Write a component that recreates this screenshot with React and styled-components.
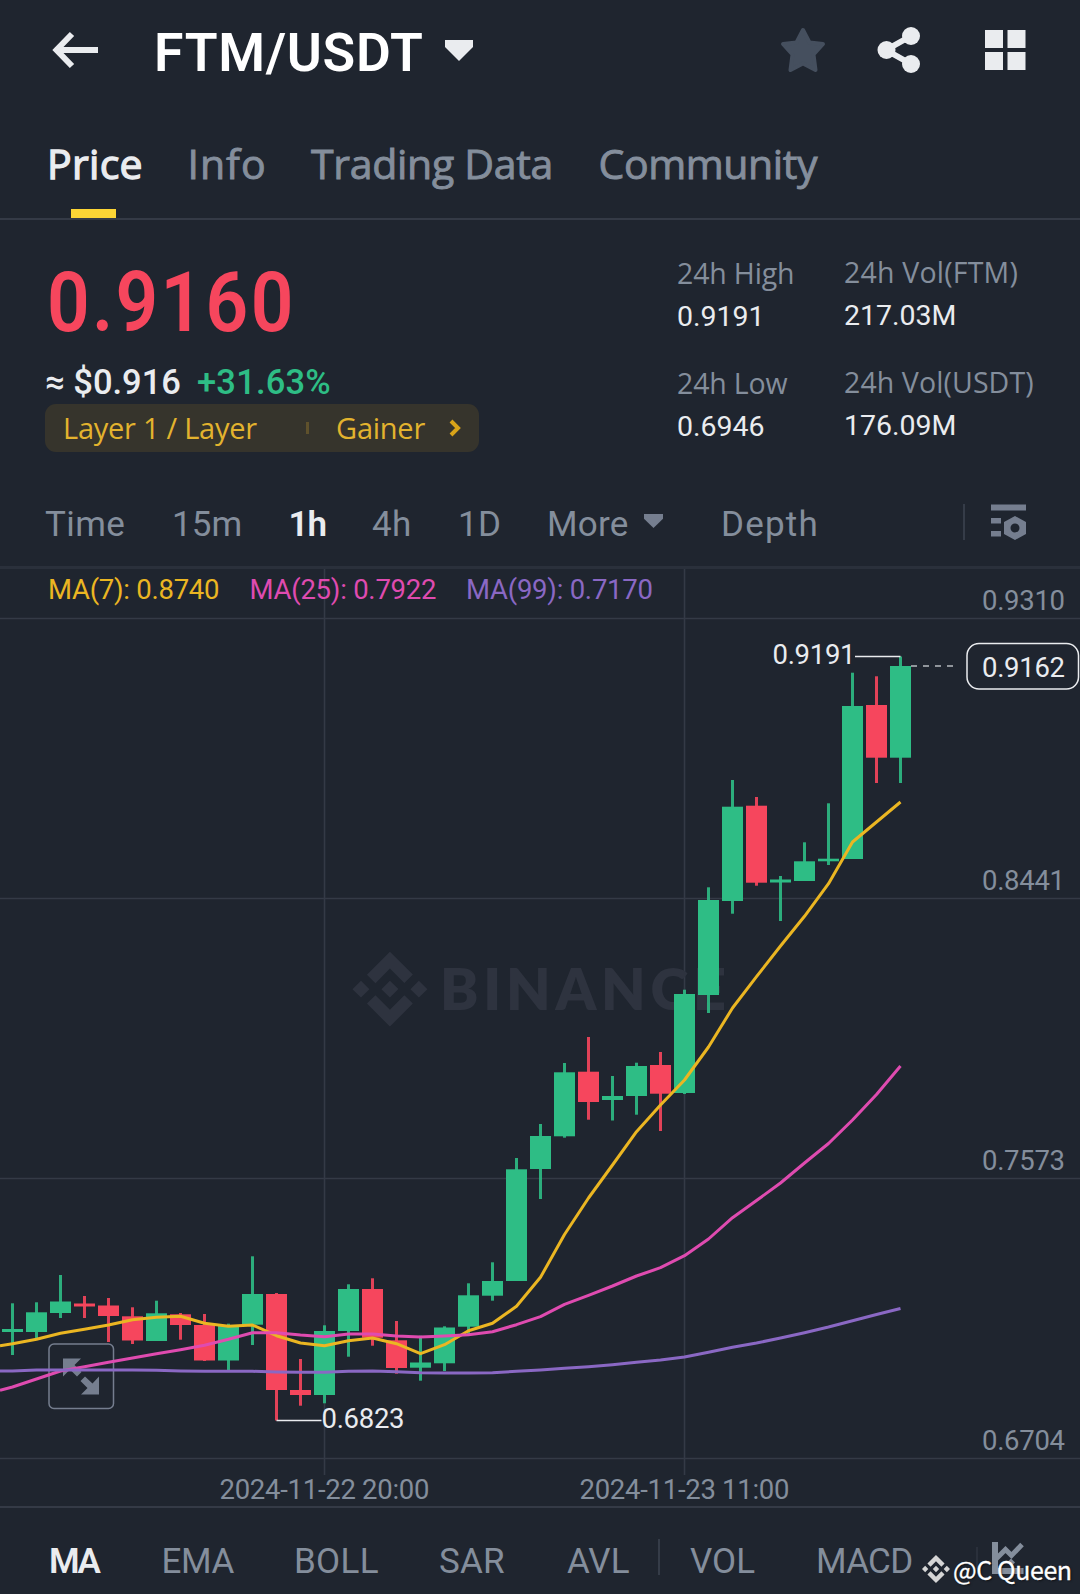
import React from 'react';
import styled, { createGlobalStyle, css } from 'styled-components';

const colors = {
  bg: '#1f252f',
  text: '#eaecef',
  muted: '#848e9c',
  icon: '#757e8f',
  line: '#343a46',
  green: '#2ebd85',
  red: '#f6465d',
  yellow: '#ebb622',
  pink: '#df4bb0',
  purple: '#8a68c4',
};

const fonts = {
  ui: "'Open Sans', 'Noto Sans', sans-serif",
  number: "Roboto, 'Liberation Sans', sans-serif",
};

const GlobalStyle = createGlobalStyle`
  * {
    box-sizing: border-box;
  }

  body {
    margin: 0;
    background: ${colors.bg};
  }
`;

const Screen = styled.main`
  position: relative;
  display: flex;
  flex-direction: column;
  width: 1080px;
  height: 1594px;
  overflow: hidden;
  background: ${colors.bg};
  color: ${colors.text};
  font-family: ${fonts.number};
  white-space: nowrap;

  svg {
    display: block;
    flex: none;
  }
`;

const Header = styled.header`
  display: flex;
  align-items: center;
  height: 100px;
  padding: 0 54px 0 52px;
`;

const Pair = styled.h1`
  width: 291px;
  margin: 6px 0 0 54px;
  font-size: 53.5px;
  font-weight: 600;
  line-height: 60px;
  letter-spacing: 0.7px;
  color: #fff;
`;

const HeaderActions = styled.div`
  display: flex;
  align-items: center;
  gap: 51px;
  margin-left: auto;
`;

const Tabs = styled.nav`
  display: flex;
  height: 120px;
  padding-left: 47px;
  border-bottom: 2px solid ${colors.line};
`;

const Tab = styled.a`
  position: relative;
  width: ${props => props.$width}px;
  padding-top: 35px;
  font-family: ${fonts.ui};
  font-size: 41px;
  font-weight: 500;
  line-height: 56px;
  letter-spacing: ${props => props.$spacing}px;
  -webkit-text-stroke: 0.9px currentColor;
  color: ${props => (props.$active ? colors.text : colors.muted)};

  ${props =>
    props.$active &&
    css`
      -webkit-text-stroke-width: 1.3px;

      &::after {
        content: '';
        position: absolute;
        left: 24px;
        bottom: 0;
        width: 45px;
        height: 9px;
        background: #fcd535;
      }
    `}
`;

const Summary = styled.section`
  display: flex;
  height: 260px;
  padding-left: 45px;
`;

const PriceColumn = styled.div`
  width: 632px;
  padding-top: 38px;
`;

const LastPrice = styled.div`
  height: 90px;
  margin-left: 2px;
  font-size: 83px;
  font-weight: 600;
  line-height: 90px;
  letter-spacing: 2.6px;
  transform: scaleX(0.9);
  transform-origin: left;
  color: ${colors.red};
`;

const Converted = styled.div`
  display: flex;
  height: 56px;
  padding-top: 12px;
  font-size: 34.5px;
  font-weight: 500;
  line-height: 44px;
`;

const Fiat = styled.span`
  width: 152px;
`;

const Change = styled.span`
  letter-spacing: 0.2px;
  color: ${colors.green};
`;

const Tag = styled.div`
  display: flex;
  align-items: center;
  width: 434px;
  height: 48px;
  padding-left: 18px;
  border-radius: 11px;
  background: #36342c;
  font-family: ${fonts.ui};
  font-size: 29px;
  line-height: 48px;
  letter-spacing: -0.25px;
  color: #e3b32e;

  svg {
    margin: 0 18px 0 24px;
  }
`;

const TagDivider = styled.i`
  width: 3px;
  height: 12px;
  margin: 0 27px 0 auto;
  background: #5f512c;
`;

const StatsColumn = styled.dl`
  width: ${props => props.$width}px;
  margin: ${props => props.$top}px 0 0;
`;

const StatLabel = styled.dt`
  height: 44px;
  font-family: ${fonts.ui};
  font-size: 28.5px;
  line-height: 40px;
  letter-spacing: ${props => props.$spacing || 0}px;
  color: ${colors.muted};
`;

const StatValue = styled.dd`
  height: 66px;
  margin: 0;
  font-size: 28.5px;
  line-height: 40px;
`;

const Intervals = styled.nav`
  display: flex;
  height: 89px;
  padding-left: 45px;
  border-bottom: 3px solid #2a303b;
`;

const Interval = styled.a`
  display: flex;
  width: ${props => props.$width}px;
  padding-top: 24px;
  font-size: 35px;
  font-weight: ${props => (props.$active ? 600 : 400)};
  line-height: 42px;
  letter-spacing: ${props => props.$spacing}px;
  color: ${props => (props.$active ? colors.text : colors.muted)};

  svg {
    margin: 10px 0 0 auto;
  }
`;

const Divider = styled.i`
  flex: none;
  width: 2px;
  height: ${props => props.$height || 36}px;
  margin: ${props => props.$margin};
  background: ${props => props.$color || '#353c48'};
`;

const IntervalSettings = styled.div`
  display: flex;
  margin-left: auto;
  padding: 24px 54px 0 0;
`;

const ChartArea = styled.section`
  height: 937px;
`;

const Indicators = styled.nav`
  display: flex;
  height: 88px;
  padding-left: 49px;
  border-top: 2px solid ${colors.line};
`;

const Indicator = styled.a`
  width: ${props => props.$width}px;
  padding-top: 33px;
  font-size: 35px;
  font-weight: ${props => (props.$active ? 600 : 400)};
  line-height: 42px;
  letter-spacing: ${props => props.$spacing}px;
  color: ${props => (props.$active ? colors.text : colors.muted)};
`;

const IndicatorSettings = styled.div`
  padding: 34px 0 0 14px;
`;

const Signature = styled.div`
  position: absolute;
  left: 922px;
  bottom: 6px;
  display: flex;
  align-items: center;
  gap: 3px;
  font-family: 'Noto Sans CJK SC', 'Noto Sans', sans-serif;
  font-size: 25px;
  font-weight: 400;
  line-height: 38px;
  letter-spacing: -0.4px;
  -webkit-text-stroke: 0.3px currentColor;
  color: #fff;
  text-shadow: 1px 1px 2px rgba(0, 0, 0, 0.6);
`;

const BINANCE_PATH =
  'M16.624 13.92l2.7175 2.7154-7.353 7.353-7.353-7.352 2.7175-2.7164 4.6355 4.6595 4.6356-4.6595zM21.2606 9.2836L24 12l-2.7154 2.7164L18.5682 12l2.6924-2.7164zM11.9886 9.2846l2.7163 2.6914-2.7164 2.7174L9.2721 12l2.7165-2.7154zM2.7164 9.2836L5.4088 12l-2.6914 2.6924L0 12l2.7164-2.7164zM11.9885.0115l7.353 7.329-2.7174 2.7154-4.6356-4.6356-4.6355 4.6595-2.7174-2.7154 7.353-7.353z';

// [direction, high, body top, body bottom, low] in chart units
const candles = [
  ['up', 1303.3, 1329, 1332, 1355],
  ['up', 1302.3, 1312.3, 1332, 1338],
  ['up', 1275, 1301.5, 1313, 1318],
  ['down', 1296, 1303.5, 1306.5, 1318],
  ['down', 1298, 1305.5, 1316, 1342],
  ['down', 1307.3, 1316.3, 1340.5, 1344],
  ['up', 1300.7, 1313.3, 1341, 1341],
  ['down', 1313, 1314.3, 1325, 1339.7],
  ['down', 1314, 1325, 1360.5, 1361],
  ['up', 1323.7, 1326, 1360.5, 1370.7],
  ['up', 1256.3, 1294, 1324.7, 1345],
  ['down', 1293, 1294, 1390, 1420.5],
  ['down', 1359, 1390, 1395, 1405.7],
  ['up', 1325.3, 1331, 1395, 1403.3],
  ['up', 1284.3, 1289, 1331, 1356.7],
  ['down', 1278.3, 1289, 1337.7, 1345.7],
  ['down', 1321, 1340.3, 1368, 1373.7],
  ['up', 1335.7, 1362.5, 1367.7, 1380.7],
  ['up', 1326.3, 1327.5, 1363.3, 1371],
  ['up', 1283.3, 1295.3, 1326.7, 1335],
  ['up', 1262.3, 1281, 1295.7, 1300.7],
  ['up', 1158, 1169.3, 1281, 1281],
  ['up', 1124, 1136, 1169, 1199],
  ['up', 1063, 1072.3, 1136.3, 1137.7],
  ['down', 1037, 1071.7, 1102, 1119.7],
  ['up', 1076, 1096, 1100, 1120.5],
  ['up', 1062.7, 1066, 1096, 1114.7],
  ['down', 1052, 1065, 1093.7, 1131],
  ['up', 989.7, 994, 1093, 1094],
  ['up', 887.3, 900, 995, 1013],
  ['up', 780, 806.7, 901, 913.7],
  ['down', 797, 805.7, 882.7, 885.7],
  ['up', 876, 879.5, 882.5, 921],
  ['up', 842.3, 861.3, 881, 881],
  ['up', 803.3, 858.7, 861.3, 865],
  ['up', 672.7, 706, 859, 859],
  ['down', 676.3, 705, 757.7, 783],
  ['up', 656.5, 666, 757.7, 783],
];

// the first value of every average is its height at the left edge
const averages = [
  {
    color: colors.yellow,
    values: [
      1345.7, 1343.7, 1339.3, 1333.3, 1329.3, 1325, 1319.7, 1317.3, 1316.3, 1323.3, 1326.3, 1325, 1335.7, 1343, 1345.7,
      1340.7, 1338, 1343.7, 1353.7, 1344.7, 1330.7, 1323.3, 1306.3, 1277.3, 1234.5, 1198, 1165, 1131.7, 1105, 1080,
      1047, 1008, 976.7, 946, 916.3, 883.7, 842, 822, 802,
    ],
  },
  {
    color: colors.pink,
    values: [
      1390.3, 1387, 1379, 1371, 1366.7, 1362.3, 1358, 1353.7, 1349.7, 1345.3, 1339.3, 1332.7, 1332.7, 1335, 1336.7,
      1334, 1334, 1336, 1337, 1336, 1334.7, 1331.7, 1324.7, 1316.7, 1304.3, 1295.3, 1286, 1276, 1267.7, 1255.7, 1239,
      1217.7, 1200.5, 1183, 1163, 1143.5, 1120, 1094.5, 1066,
    ],
  },
  {
    color: colors.purple,
    values: [
      1371, 1371, 1370, 1370, 1370, 1370, 1370, 1370.3, 1371, 1371.3, 1371.3, 1371.3, 1372, 1372.3, 1372.3, 1371.3,
      1371, 1371.7, 1372.7, 1373, 1373, 1372.7, 1371.3, 1370, 1368.3, 1366.7, 1364.7, 1362.3, 1360, 1357, 1352.3,
      1347.3, 1343, 1338, 1332.7, 1327, 1320.7, 1314.5, 1308.5,
    ],
  },
];

const levels = [
  { label: '0.9310', y: 618.5 },
  { label: '0.8441', y: 898.5 },
  { label: '0.7573', y: 1178.5 },
  { label: '0.6704', y: 1458.5 },
];

const times = [
  { label: '2024-11-22 20:00', x: 324.5 },
  { label: '2024-11-23 11:00', x: 684.5 },
];

const legend = [
  { label: 'MA(7): 0.8740', x: 48, length: 171.5, color: colors.yellow },
  { label: 'MA(25): 0.7922', x: 249.5, length: 187, color: colors.pink },
  { label: 'MA(99): 0.7170', x: 466, length: 187, color: colors.purple },
];

const candleX = index => 12.5 + index * 24;

const Caret = ({ width, height, color }) => (
  <svg width={width} height={height} viewBox="0 0 28 21" preserveAspectRatio="none">
    <path d="M0 0H28V7L14 21L0 7Z" fill={color} />
  </svg>
);

const Candle = ({ index, data }) => {
  const [direction, high, top, bottom, low] = data;
  const x = candleX(index);

  return (
    <g fill={direction === 'up' ? colors.green : colors.red}>
      <rect x={x - 1.5} y={high} width="3" height={low - high} opacity="0.9" />
      <rect x={x - 10.5} y={top} width="21" height={bottom - top} />
    </g>
  );
};

const Chart = () => (
  <svg width="1080" height="937" viewBox="0 569 1080 937" fontFamily={fonts.number} fontSize="27.5">
    <g stroke={colors.line} strokeWidth="1.6">
      {levels.map(level => (
        <line key={level.label} x1="0" x2="1080" y1={level.y} y2={level.y} />
      ))}
      {times.map(time => (
        <line key={time.label} x1={time.x} x2={time.x} y1="569" y2="1475" />
      ))}
    </g>

    <g fill="#2e333f">
      <path d={BINANCE_PATH} transform="translate(352.5 951.7) scale(3.12)" />
      <text
        x="440"
        y="1009.5"
        fontFamily="Lato, sans-serif"
        fontSize="57.5"
        fontWeight="800"
        textLength="286"
        lengthAdjust="spacing"
      >
        BINANCE
      </text>
    </g>

    {legend.map(item => (
      <text key={item.label} x={item.x} y="599" fill={item.color} textLength={item.length}>
        {item.label}
      </text>
    ))}

    <g fill={colors.muted}>
      {levels.map(level => (
        <text key={level.label} x="982" y={level.y - 8.5} textLength="83">
          {level.label}
        </text>
      ))}
      {times.map(time => (
        <text key={time.label} x={time.x} y="1499" textAnchor="middle" textLength="210">
          {time.label}
        </text>
      ))}
    </g>

    {candles.map((data, index) => (
      <Candle key={index} index={index} data={data} />
    ))}

    <rect x="49" y="1344" width="64.5" height="64.5" rx="5" fill="none" stroke={colors.icon} strokeWidth="1.5" />
    <g fill={colors.icon}>
      <path d="M63 1358.5H81L74.5 1365L81.5 1372L77 1376.5L70 1369.5L63 1376.5Z" />
      <path d="M99 1394.5H81L87.5 1388L80.5 1381L85 1376.5L92.5 1383.5L99 1376.5Z" />
    </g>

    <g fill="none" strokeWidth="3" strokeLinejoin="round">
      {averages.map(({ color, values: [edge, ...values] }) => (
        <polyline
          key={color}
          stroke={color}
          points={[`0,${edge}`, ...values.map((y, index) => `${candleX(index)},${y}`)].join(' ')}
        />
      ))}
    </g>

    <g stroke={colors.text} strokeWidth="1.5" fill="none">
      <path d="M276.5 1420.5H321.5M855 656.5H900.5" />
      <path d="M911 666H953" stroke="#b7bac0" strokeDasharray="6" />
      <rect x="967" y="643.5" width="111.5" height="45.5" rx="12" />
    </g>
    <g fill={colors.text}>
      <text x="321.5" y="1428" textLength="83">
        0.6823
      </text>
      <text x="772.5" y="664" textLength="83">
        0.9191
      </text>
      <text x="982" y="677" textLength="83">
        0.9162
      </text>
    </g>
  </svg>
);

const App = () => (
  <React.Fragment>
    <GlobalStyle />
    <Screen>
      <Header>
        <svg width="48" height="40" viewBox="0 0 48 40">
          <path d="M20 4L4.5 20L20 36M4 20H46" fill="none" stroke={colors.text} strokeWidth="6" />
        </svg>
        <Pair>FTM/USDT</Pair>
        <Caret width={28} height={21} color={colors.text} />
        <HeaderActions>
          <svg width="46" height="46" viewBox="0 0 46 46">
            <path
              d="M23 3L29.5 15.5L43 17L33.5 27.5L35.5 43L23 36.5L10.5 43L12.5 27.5L3 17L16.5 15.5Z"
              fill="#454f5e"
              stroke="#454f5e"
              strokeWidth="4"
              strokeLinejoin="round"
            />
          </svg>
          <svg width="44" height="46" viewBox="0 0 44 46">
            <path d="M34 9L9 23L34 37" fill="none" stroke={colors.text} strokeWidth="6" />
            <circle cx="34" cy="9" r="9" fill={colors.text} />
            <circle cx="9.5" cy="23" r="9" fill={colors.text} />
            <circle cx="34" cy="37" r="9" fill={colors.text} />
          </svg>
          <svg width="54" height="40" viewBox="-13 0 54 40">
            <path d="M0 0H18V18H0ZM22.5 0H40.5V18H22.5ZM0 22H18V40H0ZM22.5 22H40.5V40H22.5Z" fill={colors.text} />
          </svg>
        </HeaderActions>
      </Header>

      <Tabs>
        <Tab $width={140.5} $spacing={0.3} $active>
          Price
        </Tab>
        <Tab $width={123.5} $spacing={1}>
          Info
        </Tab>
        <Tab $width={287.5} $spacing={-0.3}>
          Trading Data
        </Tab>
        <Tab $width={230} $spacing={-0.4}>
          Community
        </Tab>
      </Tabs>

      <Summary>
        <PriceColumn>
          <LastPrice>0.9160</LastPrice>
          <Converted>
            <Fiat>≈ $0.916</Fiat>
            <Change>+31.63%</Change>
          </Converted>
          <Tag>
            <span>Layer 1 / Layer</span>
            <TagDivider />
            <span>Gainer</span>
            <svg width="12" height="18" viewBox="0 0 12 18">
              <path d="M2 2L9 9L2 16" fill="none" stroke="#d9a419" strokeWidth="4" />
            </svg>
          </Tag>
        </PriceColumn>
        <StatsColumn $width={167} $top={33}>
          <StatLabel $spacing={-0.15}>24h High</StatLabel>
          <StatValue>0.9191</StatValue>
          <StatLabel $spacing={-0.15}>24h Low</StatLabel>
          <StatValue>0.6946</StatValue>
        </StatsColumn>
        <StatsColumn $width={236} $top={32}>
          <StatLabel $spacing={0.2}>24h Vol(FTM)</StatLabel>
          <StatValue>217.03M</StatValue>
          <StatLabel $spacing={0.1}>24h Vol(USDT)</StatLabel>
          <StatValue>176.09M</StatValue>
        </StatsColumn>
      </Summary>

      <Intervals>
        <Interval $width={127} $spacing={0.4}>
          Time
        </Interval>
        <Interval $width={116.5} $spacing={0.1}>
          15m
        </Interval>
        <Interval $width={83.5} $spacing={-0.9} $active>
          1h
        </Interval>
        <Interval $width={86} $spacing={0.4}>
          4h
        </Interval>
        <Interval $width={89} $spacing={0.4}>
          1D
        </Interval>
        <Interval $width={174} $spacing={0.2}>
          More
          <Divider $margin="0 14px 0 0" $color="transparent" />
          <Caret width={19} height={14} color={colors.icon} />
          <Divider $margin="0 57px 0 0" $color="transparent" />
        </Interval>
        <Interval $width={110} $spacing={1.2}>
          Depth
        </Interval>
        <IntervalSettings>
          <Divider $margin="0 26px 0 0" />
          <svg width="35" height="36" viewBox="0 0 35 36">
            <path d="M0 0.5H35V6.5H0ZM0 14H10V19.5H0ZM0 27H10V32.5H0Z" fill={colors.icon} />
            <path
              d="M24 12L35 18V30L24 36L13 30V18ZM24 19.5A4.5 4.5 0 1 0 24 28.5A4.5 4.5 0 1 0 24 19.5Z"
              fill={colors.icon}
              fillRule="evenodd"
            />
          </svg>
        </IntervalSettings>
      </Intervals>

      <ChartArea>
        <Chart />
      </ChartArea>

      <Indicators>
        <Indicator $width={112.5} $spacing={-2.4} $active>
          MA
        </Indicator>
        <Indicator $width={132.5} $spacing={-0.4}>
          EMA
        </Indicator>
        <Indicator $width={145} $spacing={0.3}>
          BOLL
        </Indicator>
        <Indicator $width={128} $spacing={0.2}>
          SAR
        </Indicator>
        <Indicator $width={91} $spacing={0}>
          AVL
        </Indicator>
        <Divider $margin="31px 30px 0 0" />
        <Indicator $width={126} $spacing={0}>
          VOL
        </Indicator>
        <Indicator $width={160} $spacing={-0.7}>
          MACD
        </Indicator>
        <Divider $margin="39px 0 0" $height={22} $color="#2a303b" />
        <IndicatorSettings>
          <svg width="32" height="32" viewBox="0 0 32 32">
            <path d="M0 0H6V26H31.5V32H0Z" fill={colors.muted} />
            <path d="M4 17L13.5 7.5L19.5 13.5L30 2.5" fill="none" stroke={colors.muted} strokeWidth="5" />
            <path d="M19 16.5L23 20.5L19 24.5L15 20.5Z" fill={colors.muted} />
          </svg>
        </IndicatorSettings>
      </Indicators>

      <Signature>
        <svg width="28" height="28" viewBox="0 0 24 24">
          <path d={BINANCE_PATH} fill="#d5d5d5" />
        </svg>
        @C Queen
      </Signature>
    </Screen>
  </React.Fragment>
);

export default App;
